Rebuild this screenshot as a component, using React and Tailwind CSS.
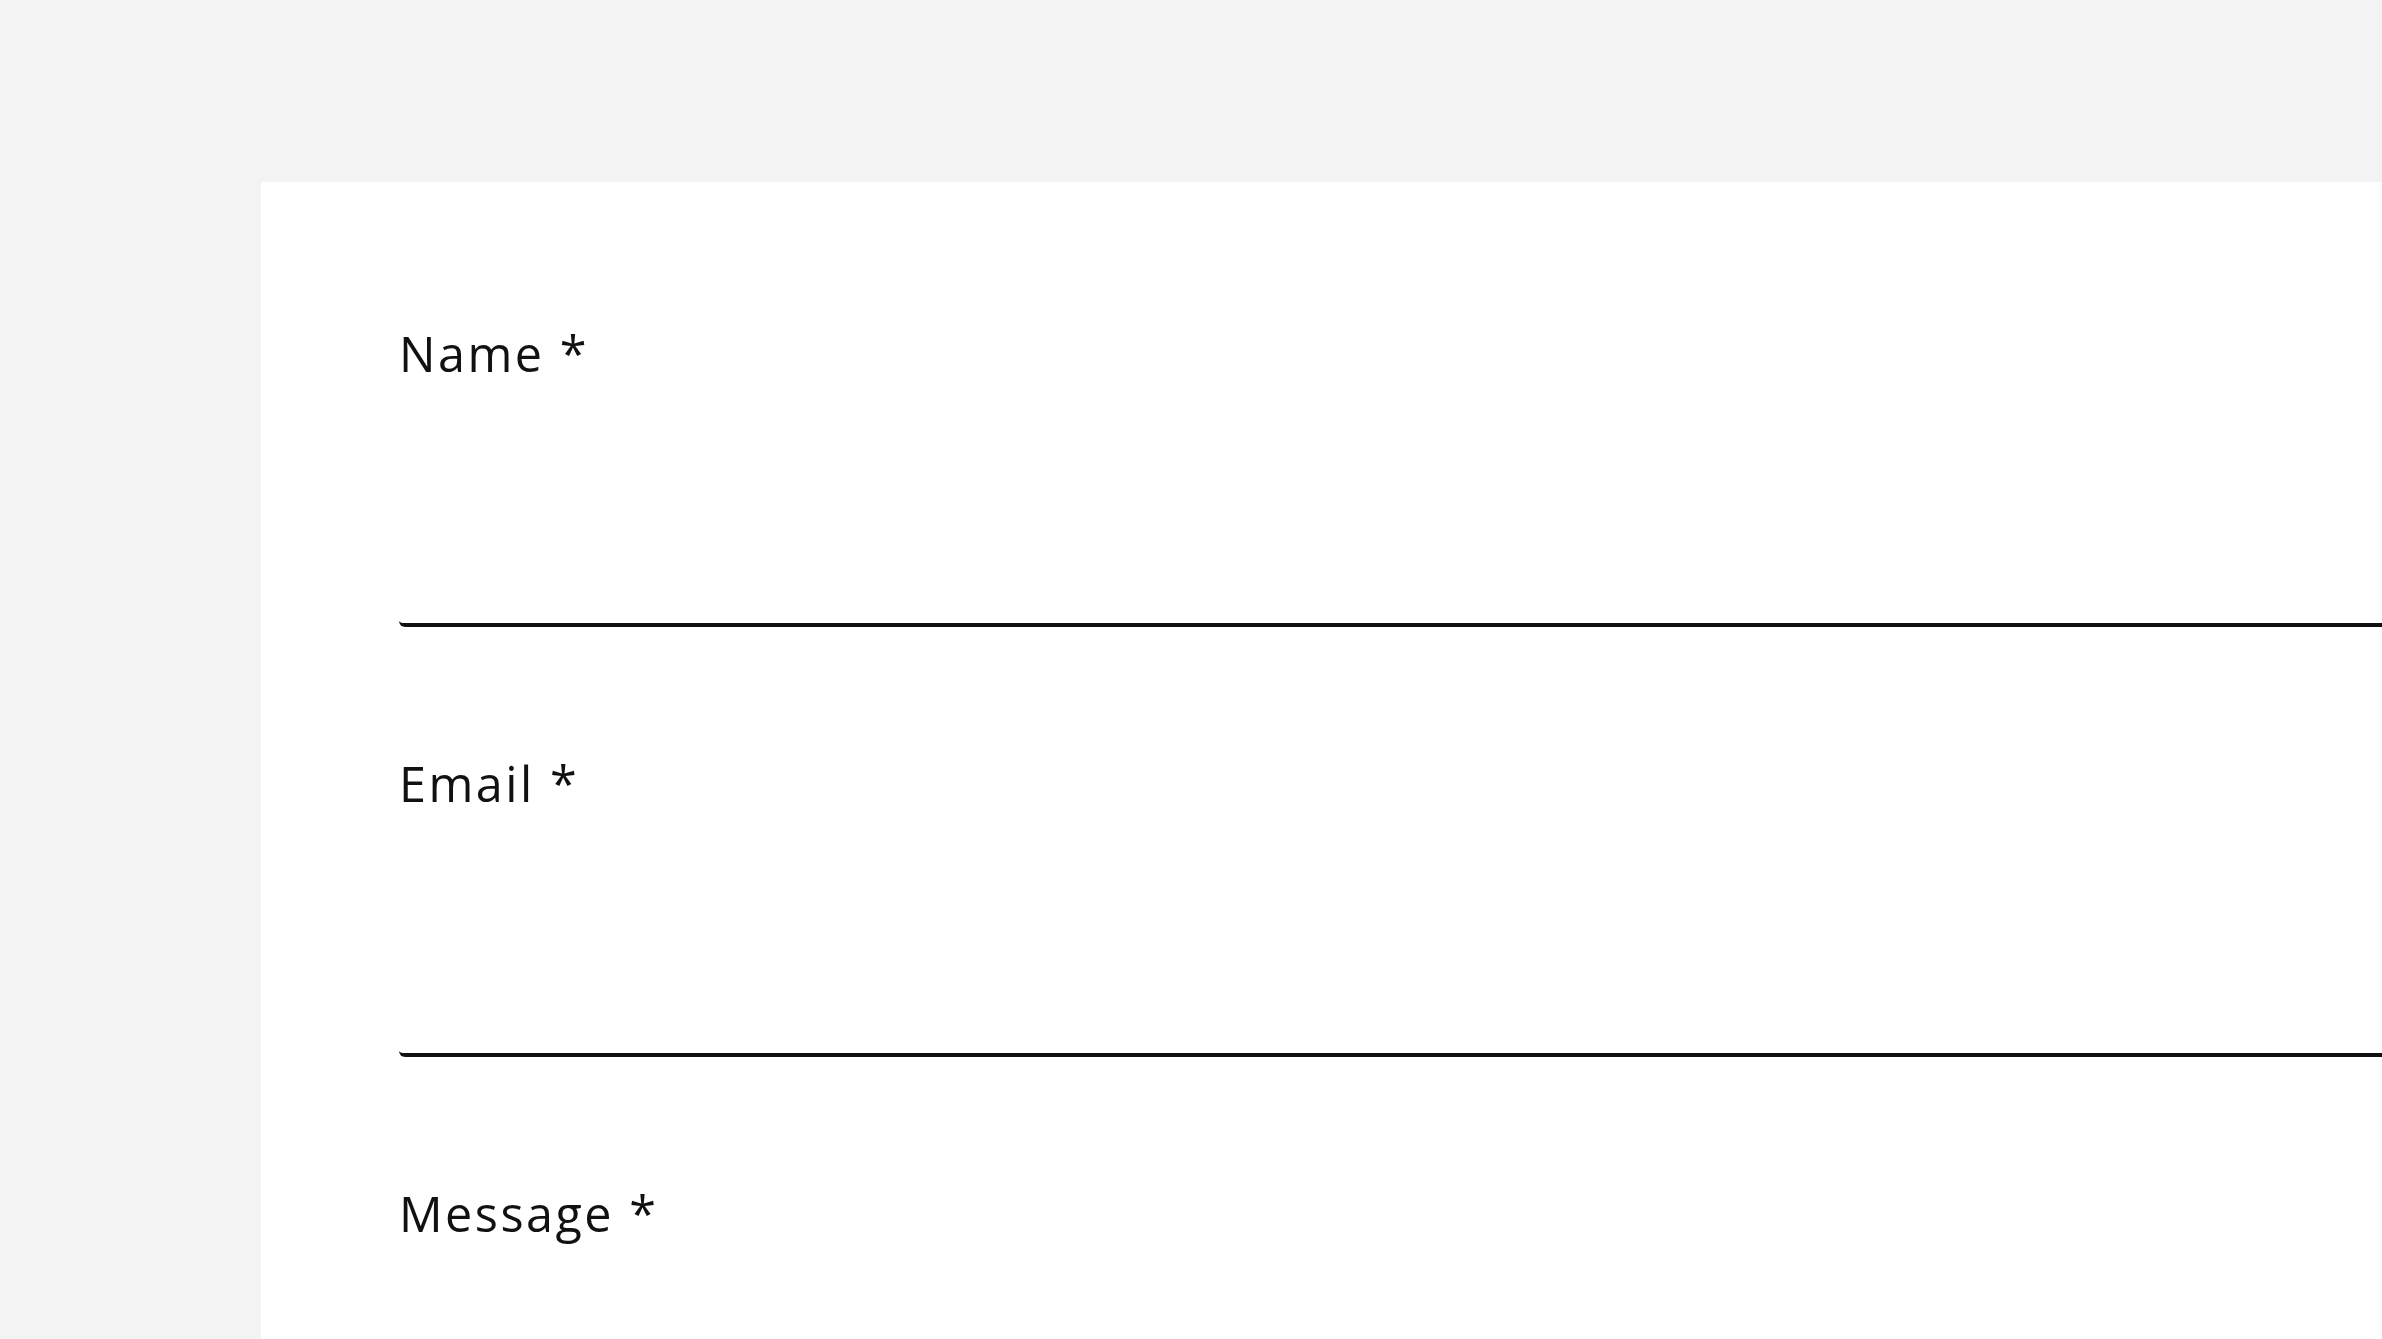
import React from "react";

function Field({ label, last }) {
  return (
    <div className={last ? "" : "mb-[132px]"}>
      <label className="block text-[48.5px] leading-[48px] tracking-[2.5px] text-[#111111]" style={{ fontFamily: '"Open Sans", sans-serif' }}>
        {label} *
      </label>
      {!last && (
        <div className="h-[250px] w-[2200px] border-b-[4px] border-[#111111] rounded-bl-[6px]" />
      )}
    </div>
  );
}

export default function App() {
  return (
    <div className="w-full h-[1339px] overflow-hidden bg-[#f3f3f3] pl-[261px] pt-[182px]" style={{ fontFamily: '"Open Sans", sans-serif' }}>
      <div className="w-[2400px] h-[1300px] bg-white pl-[138px] pt-[147px]">
        <form>
          <Field label="Name" />
          <Field label="Email" />
          <Field label="Message" last />
        </form>
      </div>
    </div>
  );
}
